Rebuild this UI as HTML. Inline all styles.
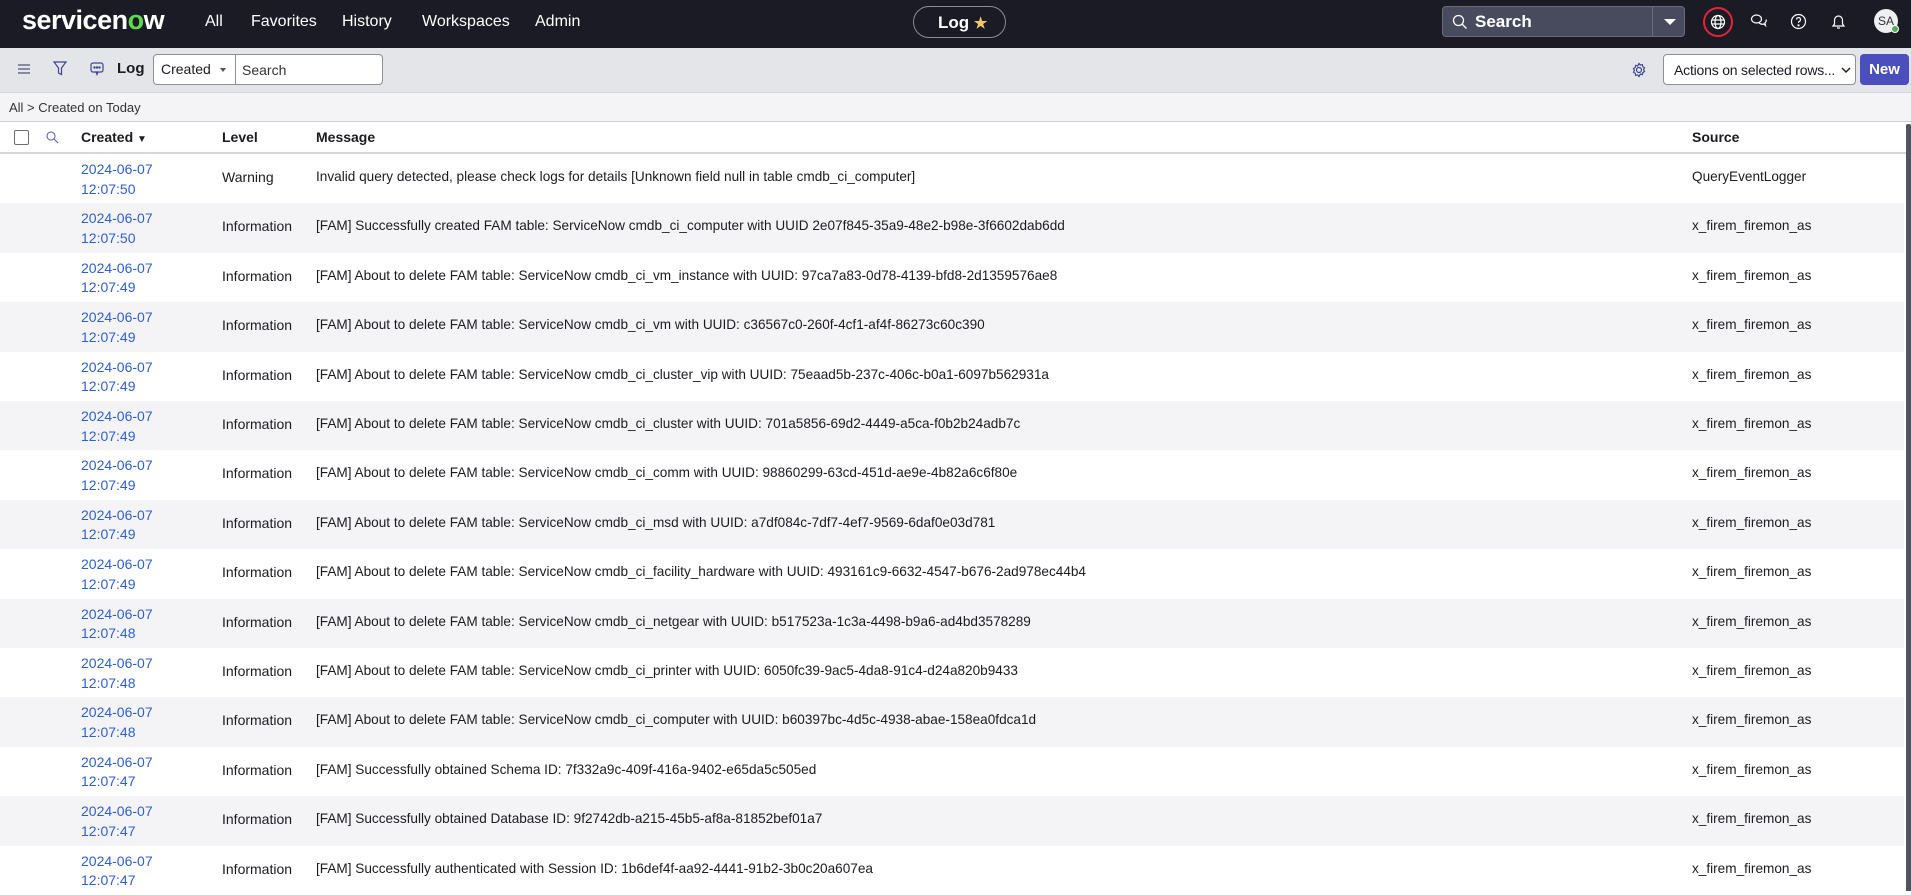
<!DOCTYPE html>
<html><head><meta charset="utf-8"><style>
*{box-sizing:border-box;margin:0;padding:0}
body{width:1911px;height:891px;overflow:hidden;font-family:"Liberation Sans",sans-serif;background:#fff;color:#1b1b22;position:relative}
.top{position:absolute;left:0;top:0;width:1911px;height:48px;background:#1a1b25}
.abs{position:absolute}
.nav{color:#fff;font-size:16px;top:13px}
.tb{position:absolute;left:0;top:48px;width:1911px;height:45px;background:#e3e5e9;border-bottom:1px solid #d4d6da}
.bc{position:absolute;left:0;top:93px;width:1911px;height:29px;background:#f4f4f6;border-bottom:1px solid #cfd0d4;font-size:13px;color:#333;padding:7px 9px}
.hd{position:absolute;left:0;top:122px;width:1906px;height:32px;border-bottom:2px solid #d4d5da;font-weight:bold;font-size:14px}
.row{position:absolute;left:0;width:1904px;height:49.4px;font-size:14px}
.row.alt{background:#f4f4f6}
.d{position:absolute;left:81px;top:6px;color:#2d5fd6;line-height:19.5px}
.l{position:absolute;left:222px;top:15px}
.m{position:absolute;left:316px;top:15px;white-space:nowrap;font-size:13.6px}
.s{position:absolute;left:1692px;top:15px;font-size:13.6px}
</style></head><body>
<div class="top">
<div class="abs" style="left:22px;top:5px;color:#fff;font-size:27px;font-weight:bold;letter-spacing:-0.5px">servicen<span style="color:#62d84e">o</span>w</div>
<div class="abs nav" style="left:205px">All</div>
<div class="abs nav" style="left:251px">Favorites</div>
<div class="abs nav" style="left:342px">History</div>
<div class="abs nav" style="left:422px">Workspaces</div>
<div class="abs nav" style="left:535px">Admin</div>
<div class="abs" style="left:913px;top:6px;width:93px;height:32px;border:1px solid #8a8c96;border-radius:16px;color:#fff;font-weight:bold;font-size:17px;padding:6px 0 0 24px">Log <span style="color:#f5c56a;font-size:15px">★</span></div>
<div class="abs" style="left:1442px;top:6px;width:243px;height:31px;background:#484a5e;border:1px solid #6a6c7c;border-radius:4px">
<svg class="abs" style="left:9px;top:7px" width="16" height="16" viewBox="0 0 16 16"><circle cx="6.5" cy="6.5" r="5" fill="none" stroke="#fff" stroke-width="1.3"/><path d="M10 10l4.5 4.5" stroke="#fff" stroke-width="1.3"/></svg>
<div class="abs" style="left:32px;top:5px;color:#fff;font-size:17px;font-weight:bold">Search</div>
<div class="abs" style="left:209px;top:0;width:1px;height:29px;background:#6a6c7c"></div>
<div class="abs" style="left:221px;top:12px;border-left:6px solid transparent;border-right:6px solid transparent;border-top:6px solid #fff"></div>
</div>
<div class="abs" style="left:1703px;top:7px;width:30px;height:30px;border:2px solid #e3243a;border-radius:50%"></div>
<svg class="abs" style="left:1710px;top:14px" width="16" height="16" viewBox="0 0 16 16" fill="none" stroke="#fff" stroke-width="1.2"><circle cx="8" cy="8" r="6.5"/><ellipse cx="8" cy="8" rx="3" ry="6.5"/><path d="M1.5 6h13M1.5 10h13"/></svg>
<svg class="abs" style="left:1750px;top:13px" width="17" height="16" viewBox="0 0 17 16" fill="none" stroke="#fff" stroke-width="1.2"><ellipse cx="6.5" cy="6" rx="5" ry="4"/><path d="M9 9.5c1 1.5 3 2 5 1.5l1.5 1.5-.5-2.5c1-.8 1.5-2 1-3.5"/></svg>
<svg class="abs" style="left:1790px;top:13px" width="17" height="17" viewBox="0 0 17 17" fill="none" stroke="#fff" stroke-width="1.2"><circle cx="8.5" cy="8.5" r="7"/><path d="M6.5 6.5a2 2 0 1 1 2.5 2c-.5.2-.5.7-.5 1.5"/><circle cx="8.5" cy="12.3" r=".5" fill="#fff"/></svg>
<svg class="abs" style="left:1831px;top:13px" width="15" height="17" viewBox="0 0 15 17" fill="none" stroke="#fff" stroke-width="1.2"><path d="M2 13h11l-1.5-2V7a4 4 0 0 0-8 0v4z"/><path d="M6 15h3"/></svg>
<div class="abs" style="left:1874px;top:9px;width:24px;height:24px;border-radius:50%;background:#eef0f3;color:#333;font-size:12px;text-align:center;line-height:24px">SA</div>
<div class="abs" style="left:1891px;top:25px;width:8px;height:8px;border-radius:50%;background:#4caf50;border:1px solid #fff"></div>
</div>
<div class="tb">
<svg class="abs" style="left:18px;top:16px" width="12" height="10"><path d="M0 1h12M0 5h12M0 9h12" stroke="#6a6d8e" stroke-width="1.6"/></svg>
<svg class="abs" style="left:53px;top:13px" width="14" height="15" fill="none" stroke="#3f4490" stroke-width="1.2"><path d="M1 1h12L8.5 7v6.5L5.5 12V7z"/></svg>
<svg class="abs" style="left:90px;top:14px" width="14" height="14" fill="none" stroke="#3f4490" stroke-width="1.2"><rect x="1" y="1" width="12" height="9" rx="2"/><path d="M6 10l1 2.5 1-2.5"/><circle cx="4.5" cy="5.5" r=".6" fill="#3f4490"/><circle cx="7" cy="5.5" r=".6" fill="#3f4490"/><circle cx="9.5" cy="5.5" r=".6" fill="#3f4490"/></svg>
<div class="abs" style="left:117px;top:12px;font-weight:bold;font-size:15px">Log</div>
<div class="abs" style="left:153px;top:6px;width:230px;height:31px;background:#fff;border:1px solid #8d8f99;border-radius:4px">
<div class="abs" style="left:7px;top:6px;font-size:14px">Created</div>
<div class="abs" style="left:66px;top:13px;border-left:3px solid transparent;border-right:3px solid transparent;border-top:4px solid #555"></div>
<div class="abs" style="left:81px;top:0;width:1px;height:29px;background:#8d8f99"></div>
<div class="abs" style="left:88px;top:7px;font-size:14px;color:#333">Search</div>
</div>
<svg class="abs" style="left:1631px;top:14px" width="16" height="16" viewBox="0 0 16 16" fill="none" stroke="#3f4490" stroke-width="1.2"><circle cx="8" cy="8" r="2.5"/><path d="M8 1.5l1.3 1.6 2-.5.5 2 1.7 1.2-.9 1.8.9 1.9-1.7 1.1-.5 2-2-.5L8 14.5l-1.3-1.6-2 .5-.5-2L2.5 10.3l.9-1.9-.9-1.8 1.7-1.2.5-2 2 .5z"/></svg>
<div class="abs" style="left:1663px;top:6px;width:193px;height:31px;background:#fff;border:1px solid #8d8f99;border-radius:4px;font-size:14px;padding:7px 0 0 10px;letter-spacing:-0.2px">Actions on selected rows...<svg class="abs" style="left:177px;top:12px" width="10" height="7"><path d="M1 1l4 4 4-4" stroke="#222" stroke-width="1.5" fill="none"/></svg></div>
<div class="abs" style="left:1860px;top:6px;width:49px;height:31px;background:#4a4fbd;border-radius:4px;color:#fff;font-weight:bold;font-size:15px;text-align:center;line-height:31px">New</div>
</div>
<div class="bc">All &gt; Created on Today</div>
<div class="hd">
<div class="abs" style="left:14px;top:8px;width:15px;height:15px;border:1px solid #6d6f78;border-radius:2px;background:#fff"></div>
<svg class="abs" style="left:46px;top:9px" width="13" height="13" fill="none" stroke="#5a5fb3" stroke-width="1.1"><circle cx="5" cy="5" r="4"/><path d="M8 8l4 4"/></svg>
<div class="abs" style="left:81px;top:7px">Created <span style="font-size:10px">▼</span></div>
<div class="abs" style="left:222px;top:7px">Level</div>
<div class="abs" style="left:316px;top:7px">Message</div>
<div class="abs" style="left:1692px;top:7px">Source</div>
</div>
<div class="abs" style="left:1906px;top:124px;width:5px;height:767px;background:#51535f;border-radius:2px 2px 0 0"></div>
<div class="row" style="top:154px"><div class="d">2024-06-07<br>12:07:50</div><div class="l">Warning</div><div class="m">Invalid query detected, please check logs for details [Unknown field null in table cmdb_ci_computer]</div><div class="s">QueryEventLogger</div></div>
<div class="row alt" style="top:203.4px"><div class="d">2024-06-07<br>12:07:50</div><div class="l">Information</div><div class="m">[FAM] Successfully created FAM table: ServiceNow cmdb_ci_computer with UUID 2e07f845-35a9-48e2-b98e-3f6602dab6dd</div><div class="s">x_firem_firemon_as</div></div>
<div class="row" style="top:252.8px"><div class="d">2024-06-07<br>12:07:49</div><div class="l">Information</div><div class="m">[FAM] About to delete FAM table: ServiceNow cmdb_ci_vm_instance with UUID: 97ca7a83-0d78-4139-bfd8-2d1359576ae8</div><div class="s">x_firem_firemon_as</div></div>
<div class="row alt" style="top:302.2px"><div class="d">2024-06-07<br>12:07:49</div><div class="l">Information</div><div class="m">[FAM] About to delete FAM table: ServiceNow cmdb_ci_vm with UUID: c36567c0-260f-4cf1-af4f-86273c60c390</div><div class="s">x_firem_firemon_as</div></div>
<div class="row" style="top:351.6px"><div class="d">2024-06-07<br>12:07:49</div><div class="l">Information</div><div class="m">[FAM] About to delete FAM table: ServiceNow cmdb_ci_cluster_vip with UUID: 75eaad5b-237c-406c-b0a1-6097b562931a</div><div class="s">x_firem_firemon_as</div></div>
<div class="row alt" style="top:401px"><div class="d">2024-06-07<br>12:07:49</div><div class="l">Information</div><div class="m">[FAM] About to delete FAM table: ServiceNow cmdb_ci_cluster with UUID: 701a5856-69d2-4449-a5ca-f0b2b24adb7c</div><div class="s">x_firem_firemon_as</div></div>
<div class="row" style="top:450.4px"><div class="d">2024-06-07<br>12:07:49</div><div class="l">Information</div><div class="m">[FAM] About to delete FAM table: ServiceNow cmdb_ci_comm with UUID: 98860299-63cd-451d-ae9e-4b82a6c6f80e</div><div class="s">x_firem_firemon_as</div></div>
<div class="row alt" style="top:499.8px"><div class="d">2024-06-07<br>12:07:49</div><div class="l">Information</div><div class="m">[FAM] About to delete FAM table: ServiceNow cmdb_ci_msd with UUID: a7df084c-7df7-4ef7-9569-6daf0e03d781</div><div class="s">x_firem_firemon_as</div></div>
<div class="row" style="top:549.2px"><div class="d">2024-06-07<br>12:07:49</div><div class="l">Information</div><div class="m">[FAM] About to delete FAM table: ServiceNow cmdb_ci_facility_hardware with UUID: 493161c9-6632-4547-b676-2ad978ec44b4</div><div class="s">x_firem_firemon_as</div></div>
<div class="row alt" style="top:598.6px"><div class="d">2024-06-07<br>12:07:48</div><div class="l">Information</div><div class="m">[FAM] About to delete FAM table: ServiceNow cmdb_ci_netgear with UUID: b517523a-1c3a-4498-b9a6-ad4bd3578289</div><div class="s">x_firem_firemon_as</div></div>
<div class="row" style="top:648px"><div class="d">2024-06-07<br>12:07:48</div><div class="l">Information</div><div class="m">[FAM] About to delete FAM table: ServiceNow cmdb_ci_printer with UUID: 6050fc39-9ac5-4da8-91c4-d24a820b9433</div><div class="s">x_firem_firemon_as</div></div>
<div class="row alt" style="top:697.4px"><div class="d">2024-06-07<br>12:07:48</div><div class="l">Information</div><div class="m">[FAM] About to delete FAM table: ServiceNow cmdb_ci_computer with UUID: b60397bc-4d5c-4938-abae-158ea0fdca1d</div><div class="s">x_firem_firemon_as</div></div>
<div class="row" style="top:746.8px"><div class="d">2024-06-07<br>12:07:47</div><div class="l">Information</div><div class="m">[FAM] Successfully obtained Schema ID: 7f332a9c-409f-416a-9402-e65da5c505ed</div><div class="s">x_firem_firemon_as</div></div>
<div class="row alt" style="top:796.2px"><div class="d">2024-06-07<br>12:07:47</div><div class="l">Information</div><div class="m">[FAM] Successfully obtained Database ID: 9f2742db-a215-45b5-af8a-81852bef01a7</div><div class="s">x_firem_firemon_as</div></div>
<div class="row" style="top:845.6px"><div class="d">2024-06-07<br>12:07:47</div><div class="l">Information</div><div class="m">[FAM] Successfully authenticated with Session ID: 1b6def4f-aa92-4441-91b2-3b0c20a607ea</div><div class="s">x_firem_firemon_as</div></div>
</body></html>
